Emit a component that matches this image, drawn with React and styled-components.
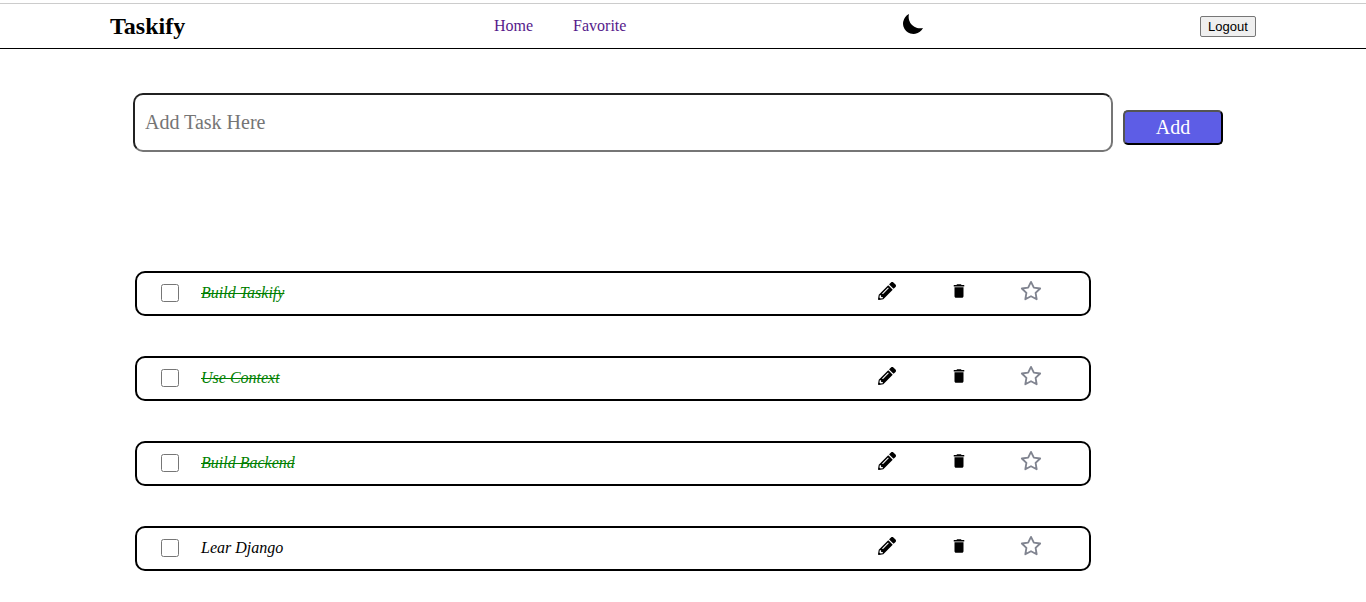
import React from "react";
import styled, { createGlobalStyle } from "styled-components";
import { FaPencilAlt } from "react-icons/fa";
import { MdDelete } from "react-icons/md";
import { FiStar } from "react-icons/fi";

const GlobalStyle = createGlobalStyle`
  * { box-sizing: border-box; }
  body {
    margin: 0;
    background: #fff;
    color: #000;
    font-family: "Liberation Serif", "Times New Roman", serif;
    font-size: 16px;
  }
`;

const Page = styled.div`
  padding-top: 3px;
`;

const Header = styled.header`
  display: flex;
  align-items: center;
  justify-content: space-between;
  height: 46px;
  padding: 0 110px;
  border-top: 1px solid #ccc;
  border-bottom: 1px solid #000;
`;

const Logo = styled.h1`
  margin: 0;
  font-size: 24px;
  line-height: 28px;
`;

const Nav = styled.nav`
  display: flex;
  gap: 40px;
  padding-left: 34px;
`;

const NavLink = styled.a`
  color: #551a8b;
  line-height: 18px;
  text-decoration: none;
`;

const IconButton = styled.button`
  display: flex;
  align-items: center;
  justify-content: center;
  width: 24px;
  height: 24px;
  margin: 0 0 4px;
  padding: 0;
  border: 0;
  background: none;
  color: ${({ $color }) => $color || "#000"};
  font-size: ${({ $size }) => $size}px;
  cursor: pointer;
`;

const LogoutButton = styled.button`
  width: 56px;
  height: 21px;
  padding: 0;
  border: 1px solid #767676;
  border-radius: 2px;
  background: #efefef;
  color: #000;
  font: 13px "Liberation Sans", Arial, sans-serif;
`;

const TaskForm = styled.form`
  display: flex;
  align-items: center;
  gap: 10px;
  margin: 44px 143px 0 133px;
`;

const TaskInput = styled.input`
  flex: 1;
  min-width: 0;
  height: 59px;
  padding: 0 10px;
  border: 2px inset #767676;
  border-radius: 10px;
  font-family: inherit;
  font-size: 20px;

  &::placeholder { color: #757575; }
`;

const AddButton = styled.button`
  width: 100px;
  height: 35px;
  margin-top: 10px;
  padding: 0;
  border: 2px outset #000;
  border-radius: 5px;
  background: #5d5de6;
  color: #fff;
  font-family: inherit;
  font-size: 20px;
`;

const TaskList = styled.ul`
  display: flex;
  flex-direction: column;
  gap: 40px;
  width: 70%;
  margin: 119px 0 0 135px;
  padding: 0;
  list-style: none;
`;

const TaskRow = styled.li`
  display: flex;
  align-items: center;
  justify-content: space-between;
  height: 45px;
  padding: 0 46px 1px 24px;
  border: 2px solid #000;
  border-radius: 10px;
`;

const TaskLabel = styled.label`
  display: flex;
  align-items: center;
  gap: 22px;
`;

const Checkbox = styled.input`
  width: 18px;
  height: 18px;
  margin: 0;
`;

const TaskText = styled.span`
  color: ${({ $done }) => ($done ? "green" : "#000")};
  font-style: italic;
  line-height: 18px;
  text-decoration: ${({ $done }) => ($done ? "line-through" : "none")};
`;

const Actions = styled.div`
  display: flex;
  gap: 48px;
`;

const MoonIcon = () => (
  <svg width="20" height="20" viewBox="0 0 20 20" fill="currentColor" aria-hidden="true">
    <path d="M6 0A10.5 10.5 0 1 0 20 14A11.5 11.5 0 0 1 6 0Z" />
  </svg>
);

const tasks = [
  { title: "Build Taskify", done: true },
  { title: "Use Context", done: true },
  { title: "Build Backend", done: true },
  { title: "Lear Django", done: false },
];

export default function App() {
  return (
    <Page>
      <GlobalStyle />
      <Header>
        <Logo>Taskify</Logo>
        <Nav>
          <NavLink href="#home">Home</NavLink>
          <NavLink href="#favorite">Favorite</NavLink>
        </Nav>
        <IconButton type="button" aria-label="Toggle dark mode" $size={20}>
          <MoonIcon />
        </IconButton>
        <LogoutButton type="button">Logout</LogoutButton>
      </Header>
      <main>
        <TaskForm onSubmit={(event) => event.preventDefault()}>
          <TaskInput type="text" placeholder="Add Task Here" aria-label="Add Task Here" />
          <AddButton type="submit">Add</AddButton>
        </TaskForm>
        <TaskList>
          {tasks.map((task) => (
            <TaskRow key={task.title}>
              <TaskLabel>
                <Checkbox type="checkbox" />
                <TaskText $done={task.done}>{task.title}</TaskText>
              </TaskLabel>
              <Actions>
                <IconButton type="button" aria-label="Edit task" $size={18}>
                  <FaPencilAlt />
                </IconButton>
                <IconButton type="button" aria-label="Delete task" $size={18}>
                  <MdDelete />
                </IconButton>
                <IconButton type="button" aria-label="Favorite task" $size={22} $color="#808490">
                  <FiStar />
                </IconButton>
              </Actions>
            </TaskRow>
          ))}
        </TaskList>
      </main>
    </Page>
  );
}
